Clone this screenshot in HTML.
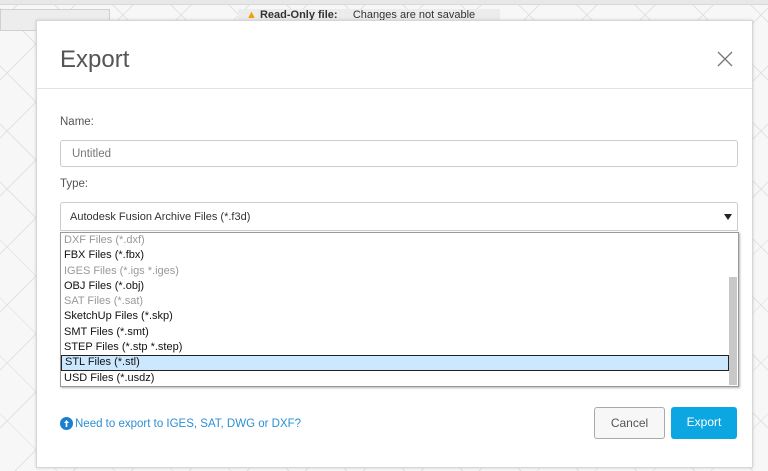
<!DOCTYPE html>
<html><head><style>
*{margin:0;padding:0;box-sizing:border-box}
body{width:768px;height:471px;overflow:hidden;background:#f4f4f4;font-family:"Liberation Sans",sans-serif;position:relative}
.bg{position:absolute;inset:0;background:
repeating-linear-gradient(45deg,transparent 0 40px,#e2e2e2 40px 41px),
repeating-linear-gradient(-45deg,transparent 0 40px,#e2e2e2 40px 41px),#f7f7f7}
.topbar{position:absolute;left:0;top:0;width:768px;height:5px;background:#e8e8e8;border-bottom:1px solid #d8d8d8}
.tab{position:absolute;left:0;top:9px;width:110px;height:22px;background:#ededed;border:1px solid #d0d0d0}
.ro{position:absolute;left:238px;top:9px;width:262px;height:14px;background:#ececec;font-size:11px;color:#333;padding-left:8px;overflow:hidden}
.dlg{position:absolute;left:36px;top:20px;width:717px;height:448px;background:#fff;border:1px solid #d6d6d6;box-shadow:0 0 3px rgba(0,0,0,.15)}
.hdr{height:68px;border-bottom:1px solid #e2e2e2;position:relative}
.hdr h1{position:absolute;left:23px;top:25px;font-weight:normal;font-size:24px;color:#555}
.x{position:absolute;left:680px;top:30px}
.lbl{position:absolute;left:23px;font-size:11.5px;color:#555}
.inp{position:absolute;left:23px;width:678px;height:27px;border:1px solid #ccc;border-radius:3px;font-size:11.5px;color:#777;padding:7px 11px}
.sel{color:#333;height:29px;padding:8px 9px;border-radius:3px 3px 0 0;font-size:11px}
.arr{position:absolute;right:5px;top:11px;width:0;height:0;border-left:4.5px solid transparent;border-right:4.5px solid transparent;border-top:6px solid #222}
.list{position:absolute;left:23px;top:211px;width:679px;height:155px;border:1px solid #999;background:#fff;box-shadow:1px 1px 2px rgba(0,0,0,.3)}
.list .r{height:15.3px;font-size:11px;line-height:15px;padding-left:3px;color:#111}
.list .g{color:#999}
.list .s{background:#cce8ff;border:1px solid #222;margin-right:9px;line-height:13px}
.list .sb{position:absolute;right:1px;top:44px;width:8px;height:108px;background:#c8c8c8}
.link{position:absolute;left:23px;top:396px;font-size:11.5px;color:#2a8fd6;display:flex;align-items:center;gap:2px}
.btn{position:absolute;top:386px;height:32px;border-radius:3px;font-size:12px;text-align:center;line-height:30px}
</style></head><body>
<div class="bg"></div>
<div class="topbar"></div>
<div class="tab"></div>
<div class="ro"><span style="color:#f0a000">▲</span> <b>Read-Only file:</b>&nbsp;&nbsp;&nbsp;&nbsp; Changes are not savable&nbsp;&nbsp;&nbsp;&nbsp;&nbsp; <span style="color:#2a8fd6">Upgrade</span></div>
<div class="dlg">
 <div class="hdr"><h1>Export</h1>
 <svg class="x" width="16" height="16" viewBox="0 0 16 16"><path d="M1 1L15 15M15 1L1 15" stroke="#777" stroke-width="1.3"/></svg></div>
 <div class="lbl" style="top:95px">Name:</div>
 <div class="inp" style="top:119px">Untitled</div>
 <div class="lbl" style="top:157px">Type:</div>
 <div class="inp sel" style="top:181px">Autodesk Fusion Archive Files (*.f3d)<div class="arr"></div></div>
 <div class="list">
  <div class="r g">DXF Files (*.dxf)</div>
  <div class="r">FBX Files (*.fbx)</div>
  <div class="r g">IGES Files (*.igs *.iges)</div>
  <div class="r">OBJ Files (*.obj)</div>
  <div class="r g">SAT Files (*.sat)</div>
  <div class="r">SketchUp Files (*.skp)</div>
  <div class="r">SMT Files (*.smt)</div>
  <div class="r">STEP Files (*.stp *.step)</div>
  <div class="r s">STL Files (*.stl)</div>
  <div class="r">USD Files (*.usdz)</div>
  <div class="sb"></div>
 </div>
 <div class="link"><svg width="13" height="13" viewBox="0 0 13 13"><circle cx="6.5" cy="6.5" r="6.5" fill="#1a7fd0"/><path d="M6.5 3L4 6h1.7v4h1.6V6H9z" fill="#fff"/></svg>Need to export to IGES, SAT, DWG or DXF?</div>
 <div class="btn" style="left:557px;width:71px;border:1px solid #aaa;background:#f7f7f7;color:#555">Cancel</div>
 <div class="btn" style="left:634px;width:66px;background:#0ca6e2;color:#fff">Export</div>
</div>
</body></html>
